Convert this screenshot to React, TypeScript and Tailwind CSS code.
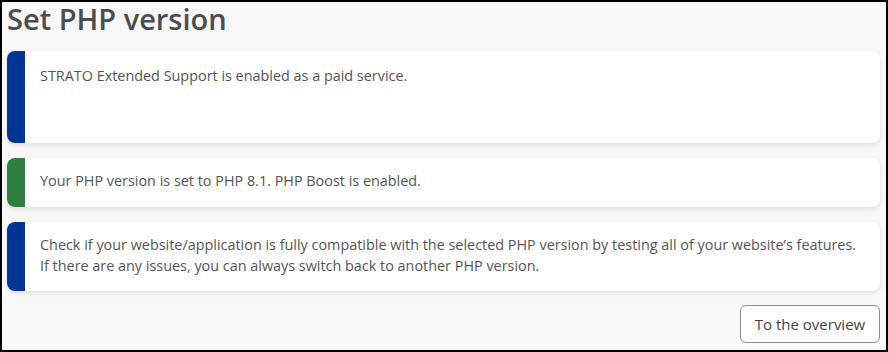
const notes = [
  {
    color: "bg-[#003595]",
    box: "h-[92px] pt-[14px]",
    lines: ["STRATO Extended Support is enabled as a paid service."],
  },
  {
    color: "bg-[#2e7f40]",
    box: "h-[49px] pt-3",
    lines: ["Your PHP version is set to PHP 8.1. PHP Boost is enabled."],
  },
  {
    color: "bg-[#003595]",
    box: "h-[69px] pt-3",
    lines: [
      "Check if your website/application is fully compatible with the selected PHP version by testing all of your website’s features.",
      "If there are any issues, you can always switch back to another PHP version.",
    ],
  },
];

export default function App() {
  return (
    <div className="w-[888px] h-[352px] border-2 border-black bg-[#f8f8f8] font-['Open_Sans',sans-serif] text-[#555] overflow-hidden">
      <div className="pl-[5px] pr-[6px]">
        <h1 className="text-[29px] leading-[34px] font-semibold text-[#4d4d4d]">Set PHP version</h1>
        <div className="mt-[15px] flex flex-col gap-[15px]">
          {notes.map((n, i) => (
            <div
              key={i}
              className={`flex ${n.box.split(" ")[0]} rounded-lg bg-white overflow-hidden shadow-[0_2px_5px_rgba(0,0,0,0.1)]`}
            >
              <div className={`w-[18px] shrink-0 ${n.color}`} />
              <div className={`pl-[15px] ${n.box.split(" ")[1]} text-[14.4px] leading-[21px]`}>
                {n.lines.map((l, j) => (
                  <p key={j}>{l}</p>
                ))}
              </div>
            </div>
          ))}
        </div>
        <div className="mt-[14px] flex justify-end">
          <button className="h-[38px] w-[140px] rounded-md border border-[#8a8a8a] bg-white text-[15px] text-[#444]">
            To the overview
          </button>
        </div>
      </div>
    </div>
  );
}
